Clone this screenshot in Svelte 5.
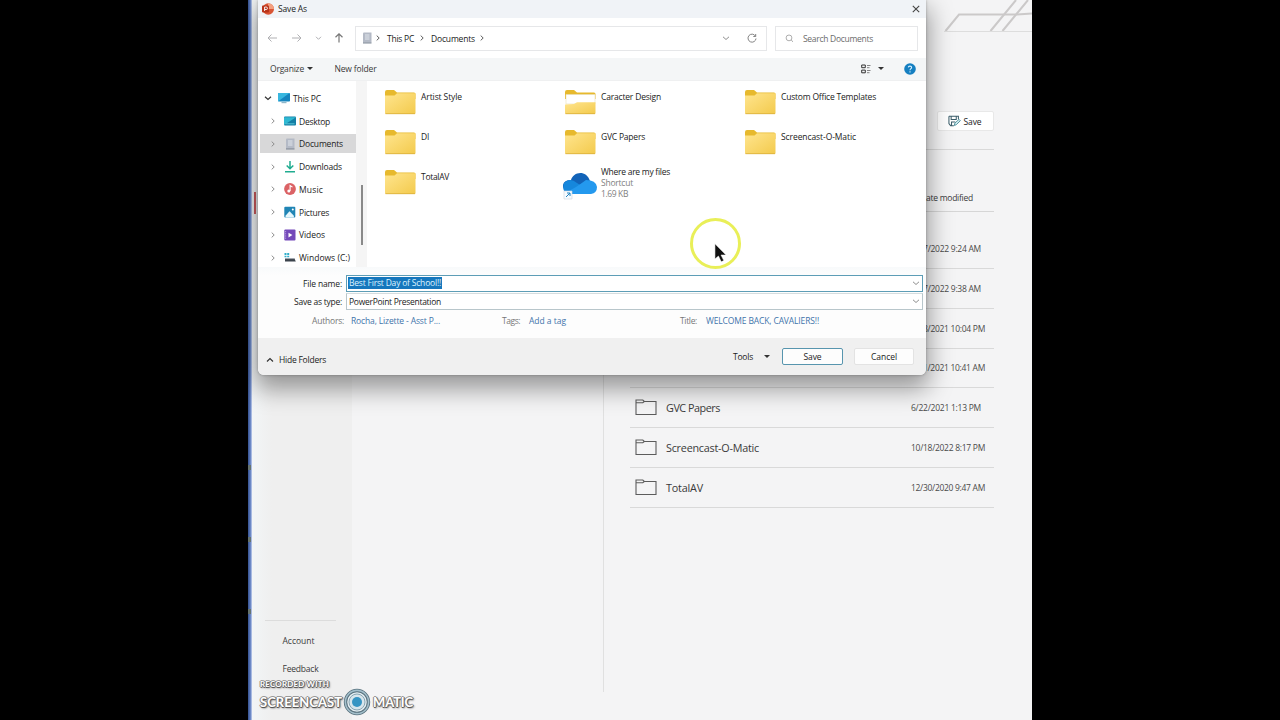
<script>
  // Tightens or loosens the tracking so that a label takes the given width.
  function fit(node, width) {
    const natural = node.getBoundingClientRect().width;
    node.style.letterSpacing = `${(width - natural) / node.textContent.length}px`;
  }
  const tree = [
    ['desktop', 'Desktop', 31], ['doc', 'Documents', 44], ['down', 'Downloads', 43],
    ['music', 'Music', 24], ['pic', 'Pictures', 30], ['video', 'Videos', 26], ['drive', 'Windows (C:)', 51]
  ];
  const files = [
    ['folder', 'Artist Style', 41], ['open', 'Caracter Design', 60], ['folder', 'Custom Office Templates', 95],
    ['folder', 'DI', 8], ['folder', 'GVC Papers', 44], ['folder', 'Screencast-O-Matic', 75],
    ['folder', 'TotalAV', 28], ['cloud', 'Where are my files', 69]
  ];
  const rows = [
    ['Caracter Design', 86, '8/17/2022 9:24 AM', 70], ['Custom Office Templates', 125, '8/17/2022 9:38 AM', 70],
    ['DI', 10, '8/18/2021 10:04 PM', 74], ['Artist Style', 56, '8/21/2021 10:41 AM', 74],
    ['GVC Papers', 54, '6/22/2021 1:13 PM', 70], ['Screencast-O-Matic', 93, '10/18/2022 8:17 PM', 74],
    ['TotalAV', 37, '12/30/2020 9:47 AM', 74]
  ];
</script>

{#snippet chev(dir, cls)}
  <svg class="chev {cls}" viewBox="0 0 8 8"><path d={dir === 'r' ? 'M2.7 1.6 5.2 4 2.7 6.4' : dir === 'd' ? 'M1 2.8 4 5.5 7 2.8' : 'M1 5.5 4 2.6 7 5.5'} /></svg>
{/snippet}

{#snippet icon(kind)}
  <svg class="ic" viewBox="0 0 12 12">
    {#if kind === 'pc'}
      <rect x="0" y="1" width="12" height="8.6" rx=".8" fill="#1685be" /><path d="M0 9.4 11.5 1H1Q0 1 0 2z" fill="#38b7df" /><path d="M3.5 10.6h5" stroke="#91b7c9" stroke-width="1.2" />
    {:else if kind === 'desktop'}
      <rect x="0" y="1.6" width="12" height="9" rx="1" fill="#147fa5" /><path d="M0 10 12 2.2H1Q0 2 0 3z" fill="#2fb8d2" /><path d="M1.5 8.8h9" stroke="#67d5e2" stroke-width=".8" />
    {:else if kind === 'doc'}
      <path d="M2 1.5Q2 .5 3 .5h7.5v9.8H2z" fill="#b4bac6" /><path d="M2 10.3h8.5v1.2H2z" fill="#7f8997" /><path d="M4 3h4.5M4 5h4.5M4 7h4.5" stroke="#e6ebf1" stroke-width=".9" />
    {:else if kind === 'down'}
      <path d="M6 0v7.4M2.7 4.5 6 7.8l3.3-3.3M1 10.7h10" fill="none" stroke="#20ac90" stroke-width="1.5" />
    {:else if kind === 'music'}
      <circle cx="6" cy="6" r="5.9" fill="#db6265" /><circle cx="4.8" cy="8" r="1.5" fill="#fff" /><path d="M6.1 8V2.6l2.4 1.5" fill="none" stroke="#fff" stroke-width="1.1" />
    {:else if kind === 'pic'}
      <rect x=".3" y=".8" width="11" height="10.8" rx="1" fill="#2085b5" /><path d="M1.5 11.4V9.8L5.5 5.2l4.4 4.6v1.6z" fill="#e6f7fc" /><circle cx="8.8" cy="3.4" r="1" fill="#fff" />
    {:else if kind === 'video'}
      <rect x=".3" y=".6" width="11.2" height="11" rx="1" fill="#7449b9" /><path d="M4.5 3.8v4.6L8.4 6z" fill="#fff" /><path d="M1.6 2v8.5" stroke="#b99ae1" stroke-width="1" stroke-dasharray="1.2 1" />
    {:else}
      <path d="M.5 1h2v2h-2zM3.2 1h2v2h-2zM.5 3.7h2v1.6h-2zM3.2 3.7h2v1.6h-2z" fill="#31aeca" /><path d="M1 6.6h9.5l1.3 3H1z" fill="#3b434c" /><path d="M1 6.6h9.5" stroke="#a4abb2" />
    {/if}
  </svg>
{/snippet}

<div class="screen">
  <div class="edge"><i></i><i></i><i></i></div>
  <div class="app">
    <nav class="side">
      <div class="links">
        <div><span use:fit={32}>Account</span></div>
        <div><span use:fit={36}>Feedback</span></div>
      </div>
    </nav>
    <section class="places"></section>
    <section class="list">
      <svg class="deco" viewBox="0 0 88 34"><g fill="none" stroke="#cbc9c9" stroke-width="2"><path d="M1.5 31 15 14.500H73L88 13.500" /><path d="M46.500 31 72 0M58.500 31 84 0" /></g><path d="M0 31.500H88" stroke="#ddd" /></svg>
      <div class="savebar">
        <div class="savebtn">
          <svg viewBox="0 0 14 12"><path d="M1 1h10.200v3M1 1v7.800L2.800 11h3.500M3.400 1v3.500h5.500V1M3.800 11V7h4" fill="none" stroke="#3d5f6b" stroke-width="1.100" /><path d="m6.800 10.800.6-2.500 4.500-4.100 1.400 1.500-4.400 4.300z" fill="#d8eff2" stroke="#398490" stroke-width=".9" /></svg>
          <span use:fit={18}>Save</span>
        </div>
      </div>
      <div class="head"><span use:fit={53}>Date modified</span></div>
      {#each rows as [name, w, date, dw]}
        <div class="row">
          <svg viewBox="0 0 22 17"><path d="M1 15.500V1h6.800l1.500 1.500H21v13z M1 3.700h6.800L9.300 2.500" fill="none" stroke="#5c5c5c" stroke-width="1.100" /></svg>
          <span class="name"><span use:fit={w}>{name}</span></span>
          <span class="date"><span use:fit={dw}>{date}</span></span>
        </div>
      {/each}
    </section>
  </div>

  <div class="dialog">
    <header class="title">
      <svg class="ppt" viewBox="0 0 12 12"><circle cx="6.200" cy="6" r="5.800" fill="#d95434" /><path d="M6 .2A5.800 5.800 0 0 1 12 6H6z" fill="#f4a080" /><rect x="0" y="2.600" width="7" height="6.800" rx=".8" fill="#b83219" /><path d="M2.600 8V4h1.600a1.200 1.200 0 0 1 0 2.500H2.600" fill="none" stroke="#fff" stroke-width=".9" /></svg>
      <span use:fit={29}>Save As</span>
      <svg class="close" viewBox="0 0 8 8"><path d="m.8.800 6.400 6.400M7.200.8.800 7.200" stroke="#444" stroke-width="1.100" /></svg>
    </header>
    <div class="nav">
      <svg class="arrows" viewBox="0 0 84 12"><g fill="none" stroke-width="1"><path d="M14 6H5M8.500 2.500 5 6l3.500 3.500M29 6h9M34.500 2.500 38 6l-3.500 3.500M53 4.800l2.500 2.500L58 4.800" stroke="#b0b0b3" /><path d="M76 10.500V2M72.500 5.300 76 1.900l3.500 3.400" stroke="#777" stroke-width="1.200" /></g></svg>
      <div class="addr">
        {@render icon('doc')}
        {@render chev('r', 'c1')}
        <span use:fit={27}>This PC</span>
        {@render chev('r', 'c2')}
        <span use:fit={44}>Documents</span>
        {@render chev('r', 'c3')}
        {@render chev('d', 'c4')}
        <svg class="refresh" viewBox="0 0 10 10"><path d="M8.500 3.200A4 4 0 1 0 9 5.500M8.700 1v2.500H6.300" fill="none" stroke="#777" stroke-width=".9" /></svg>
      </div>
      <div class="search">
        <svg viewBox="0 0 9 9"><circle cx="4" cy="3.900" r="2.900" fill="none" stroke="#999" stroke-width=".8" /><path d="M6.200 6 8 7.800" stroke="#999" stroke-width=".9" /></svg>
        <span use:fit={70}>Search Documents</span>
      </div>
    </div>
    <div class="tools">
      <span use:fit={34}>Organize</span><b class="tri"></b>
      <span class="newf"><span use:fit={42}>New folder</span></span>
      <svg class="views" viewBox="0 0 10 10"><path d="M.7 1h3.600v2.700H.7zM.7 6.100h3.600v2.700H.7z" fill="none" stroke="#333" /><path d="M6 1.500h3.500M6 3.700h2.500M6 6.500h3.500M6 8.700h2.500" stroke="#666" stroke-width=".8" /></svg>
      <b class="tri"></b>
      <svg class="help" viewBox="0 0 12 12"><circle cx="6" cy="6" r="5.800" fill="#157fc1" /><path d="M4.300 4.400C4.400 2.600 7.700 2.700 7.600 4.600 7.500 5.700 6 5.600 6 7.200M6 8.300v1.200" fill="none" stroke="#d5f0ff" stroke-width="1.100" /></svg>
    </div>
    <div class="body">
      <div class="tree">
        <div class="node root">{@render chev('d', 'dark')}{@render icon('pc')}<span use:fit={28}>This PC</span></div>
        {#each tree as [kind, label, w]}
          <div class="node" class:sel={kind === 'doc'}>{@render chev('r', '')}{@render icon(kind)}<span use:fit={w}>{label}</span></div>
        {/each}
      </div>
      <div class="scroll"><div class="thumb"></div></div>
      <div class="files">
        {#each files as [kind, label, w]}
          <div class="file">
            {#if kind === 'cloud'}
              <svg class="cloud" viewBox="0 0 36 30"><path d="M9 10C11 2 24-1 28 11Q32 14 29 20L7 22Q0 20 1 15 2 10 9 10" fill="#1263b8" /><path d="M2 13Q8 7 15 13L28 21Q26 24 23 24H8Q-1 23 2 13" fill="#1687dc" /><path d="M14 17Q20 13 24 10 34 10 35 17 35 23 29 24H7Q5 23 5 22z" fill="#2499ee" /><path d="M2 21h8v8H2z" fill="#f6fbff" stroke="#ccd5dd" stroke-width=".6" /><path d="m4 27 4-4M5 23h3v3" fill="none" stroke="#2382be" /></svg>
            {:else}
              <svg class="folder" viewBox="0 0 31 25">
                <defs><linearGradient id="fg" x1="0" y1="0" x2="1" y2="1"><stop stop-color="#ffe58f" /><stop offset="1" stop-color="#f3ca4c" /></linearGradient></defs>
                <path d="M0 2Q0 0 2 0h7l3 2.500h17q1.500 0 1.500 1.500V9H0z" fill="#e7b92d" />
                {#if kind === 'open'}<path d="M1 4.500h29V14H1z" fill="#fff" stroke="#eadfb8" stroke-width=".6" /><path d="M0 14.500 9 14l3-1.800h18.500V23q0 1-1 1H1q-1 0-1-1z" fill="url(#fg)" />
                {:else}<path d="M0 5.500h9.500L12 3.200h18.500V23q0 1-1 1H1q-1 0-1-1z" fill="url(#fg)" />{/if}
                <path d="M.5 23.700h29.500" stroke="#d9ae38" stroke-width=".8" />
              </svg>
            {/if}
            <div class="meta" class:three={kind === 'cloud'}>
              <div><span use:fit={w}>{label}</span></div>
              {#if kind === 'cloud'}<div class="dim"><span use:fit={32}>Shortcut</span></div><div class="dim"><span use:fit={27}>1.69 KB</span></div>{/if}
            </div>
          </div>
        {/each}
      </div>
    </div>
    <div class="form">
      <div class="field"><label for="fname"><span use:fit={39}>File name:</span></label><div class="box on" id="fname"><mark><span use:fit={92}>Best First Day of School!!</span></mark>{@render chev('d', 'end')}</div></div>
      <div class="field"><label for="ftype"><span use:fit={48}>Save as type:</span></label><div class="box" id="ftype"><span use:fit={92}>PowerPoint Presentation</span>{@render chev('d', 'end')}</div></div>
      <div class="props">
        <em><span use:fit={32}>Authors:</span></em><span class="val"><span use:fit={89}>Rocha, Lizette - Asst P...</span></span>
        <em><span use:fit={18}>Tags:</span></em><span class="val"><span use:fit={37}>Add a tag</span></span>
        <em><span use:fit={17}>Title:</span></em><span class="val"><span use:fit={113}>WELCOME BACK, CAVALIERS!!</span></span>
      </div>
    </div>
    <footer>
      {@render chev('u', 'dark')}
      <span class="hide"><span use:fit={47}>Hide Folders</span></span>
      <span class="tl"><span use:fit={20}>Tools</span></span><b class="tri"></b>
      <div class="btn primary"><span use:fit={18}>Save</span></div>
      <div class="btn"><span use:fit={26}>Cancel</span></div>
    </footer>
  </div>

  <div class="ring"></div>
  <svg class="cursor" viewBox="0 0 14 22"><path d="M1 1v16.500l3.800-3.200 3 6.200 2.800-1.300-3-6H13z" fill="#111" stroke="#fff" stroke-width=".6" /></svg>

  <div class="mark">
    <div class="rec"><span use:fit={69}>RECORDED WITH</span></div>
    <div class="brand">
      <span class="sc"><span use:fit={82}>SCREENCAST</span></span>
      <svg viewBox="0 0 28 28"><circle cx="14" cy="14" r="11.500" fill="#e4eef2" stroke="#57707c" stroke-width="3.400" /><circle cx="14" cy="14" r="11.600" fill="none" stroke="#a3bfcb" stroke-width="1.600" /><circle cx="14" cy="14" r="8" fill="#d8e6ec" stroke="#88a5b2" stroke-width="1" /><circle cx="14" cy="14" r="5" fill="#3695c3" /></svg>
      <span class="ma"><span use:fit={40}>MATIC</span></span>
    </div>
  </div>
</div>

<style>
  :global(body) { background: #000; overflow: hidden; }
  .screen { position: relative; width: 784px; height: 720px; margin-left: 248px; display: flex; overflow: hidden; background: #f4f4f5; font: 8.5px/11px "Open Sans", "Noto Sans", sans-serif; color: #222; white-space: nowrap; }
  .screen * { box-sizing: border-box; }
  svg { display: block; flex: none; overflow: visible; }
  span { display: inline-block; }
  .edge { width: 4px; flex: none; background: linear-gradient(90deg, #33508f, #6582c2 60%, #c5d2ef); padding-top: 465px; display: flex; flex-direction: column; gap: 67px; }
  .edge i { width: 3px; height: 5px; background: #66736d; }
  .app { flex: 1; display: flex; }
  .side { width: 100px; background: linear-gradient(90deg, #f2f5f6, #efefef 20%); display: flex; flex-direction: column; justify-content: flex-end; padding: 0 16px 8px 13px; }
  .links { border-top: 1px solid #dcdcdc; padding: 5px 0 0 17.500px; height: 92px; color: #3a3a3a; }
  .links div { height: 28px; display: flex; align-items: center; }
  .places { width: 252px; height: 692px; border-right: 1px solid #e0e0e0; }
  .list { flex: 1; padding-left: 26px; position: relative; }
  .deco { position: absolute; right: 0; top: 0; width: 88px; height: 34px; }
  .savebar { height: 150px; width: 364px; padding: 111px 0 0 307px; border-bottom: 1px solid #d9d9d9; }
  .savebtn { width: 57px; height: 20px; background: #fff; border: 1px solid #e8e8e8; border-radius: 2px; display: flex; align-items: center; padding-left: 10px; gap: 2.500px; }
  .savebtn svg { width: 13px; height: 12px; }
  .head { width: 364px; height: 62px; border-bottom: 1px solid #d6d6d6; padding: 42px 21px 0 0; text-align: right; color: #3a3a3a; }
  .row { width: 364px; height: 39.800px; border-bottom: 1px solid #d9d9d9; display: flex; align-items: center; padding-left: 5px; color: #3a3a3a; }
  .head + .row { height: 57px; padding-top: 17px; }
  .row svg { width: 22px; height: 17px; }
  .name { font-size: 10.800px; line-height: 15px; width: 254px; flex: none; padding-left: 9px; }
  .date { font-size: 8.500px; color: #4a4a4a; }

  .dialog { position: absolute; left: 10px; top: 0; width: 668px; height: 375px; background: #fff; border-radius: 0 0 6px 6px; box-shadow: 0 11px 24px 3px rgba(0,0,0,.38), 0 0 3px rgba(0,0,0,.3); display: flex; flex-direction: column; overflow: visible; }
  .dialog::before { content: ""; width: 2px; height: 22px; background: #a2484b; position: absolute; left: -4px; top: 192px; }
  .title { height: 18px; background: #f0f3f7; display: flex; align-items: center; padding: 0 6px 1px 4px; }
  .ppt { width: 12px; height: 12px; margin-right: 4px; }
  .close { width: 8px; height: 8px; margin-left: auto; }
  .nav { height: 40px; display: flex; align-items: center; padding-left: 5px; }
  .arrows { width: 84px; height: 12px; }
  .chev { width: 8px; height: 8px; fill: none; stroke: #888; stroke-width: .95; }
  .chev.dark { stroke: #333; stroke-width: 1.200; }
  .ic { width: 12px; height: 12px; }
  .addr { width: 412px; height: 25px; margin-left: 8px; border: 1px solid #e6e7e9; display: flex; align-items: center; padding-left: 5px; }
  .c1 { margin: 0 5px 0 1px; stroke: #555; } .c2 { margin: 0 5px 0 4px; stroke: #555; } .c3 { margin-left: 3px; stroke: #555; }
  .c4 { margin-left: auto; margin-right: 17px; }
  .refresh { width: 10px; height: 10px; margin-right: 9px; }
  .search { width: 143px; height: 25px; margin-left: 8px; border: 1px solid #e6e7e9; display: flex; align-items: center; padding-left: 9px; color: #6c6c6c; }
  .search svg { width: 9px; height: 9px; margin-right: 9px; }
  .tools { height: 23px; background: #f4f6f7; display: flex; align-items: center; padding: 0 0 1px 12px; color: #3a3a3a; border-bottom: 1px solid #eff0f1; }
  .tri { border: 3px solid transparent; border-top: 3.500px solid #333; border-bottom: 0; margin-left: 3px; }
  .newf { margin-left: 21.500px; }
  .views { width: 10px; height: 10px; margin-left: 484px; }
  .views + .tri { margin-left: 7px; }
  .help { width: 12px; height: 12px; margin-left: 20px; }
  .body { height: 186px; display: flex; }
  .tree { width: 98px; padding: 6px 0 0 2px; }
  .node { height: 22.750px; display: flex; align-items: center; padding-left: 9px; }
  .node .ic { margin: 0 3px 0 7px; }
  .node.root { padding-left: 4px; }
  .node.root .ic { margin: 0 3px 0 6px; }
  .node.sel { background: linear-gradient(#d8d8d9, #d8d8d9) center / 100% 19px no-repeat; }
  .scroll { width: 11px; background: #f5f5f5; padding: 104px 0 0 5px; }
  .thumb { width: 2px; height: 60px; background: #898989; }
  .files { flex: 1; padding: 0 0 0 18px; display: grid; grid-template-columns: repeat(3, 180px); grid-template-rows: repeat(3, 39.800px); overflow: hidden; }
  .file { display: flex; }
  .folder { width: 31px; height: 25px; margin-top: 9px; }
  .cloud { width: 36px; height: 30px; margin: 9px -2px 0 -3px; }
  .meta { padding: 10px 0 0 5px; }
  .meta.three { padding-top: 5px; line-height: 11.300px; }
  .meta div { height: 11.300px; }
  .dim { color: #808080; }
  .form { height: 71px; background: linear-gradient(#f8fafb, #fdfdfd 12%); padding: 7px 3px 0 0; }
  .field { height: 18px; display: flex; align-items: center; }
  .field label { width: 84px; text-align: right; margin-right: 4px; }
  .box { flex: 1; height: 17px; border: 1px solid #b8c6cb; border-top-color: #d5dddf; background: #fff; display: flex; align-items: center; padding: 0 2px; }
  .box.on { border-color: #5d9db6; }
  .end { margin-left: auto; }
  mark { background: #1677bd; color: #dcf3ff; height: 12px; line-height: 11px; padding: 0 1px; margin-left: -1px; }
  .props { display: flex; height: 21px; align-items: center; padding-left: 54px; }
  .props em { font-style: normal; color: #777; text-align: right; }
  .props .val { color: #3f74ab; margin-left: 7px; width: 151px; }
  .props .val ~ em ~ .val { width: 151px; margin-left: 9px; }
  footer { height: 37px; background: #f0f0f0; border-radius: 0 0 6px 6px; display: flex; align-items: center; padding-left: 8px; }
  footer > .chev { margin-top: 6px; }
  .hide { margin: 5px 0 0 5px; }
  .tl { margin-left: 407px; }
  footer .tri { margin-left: 11px; }
  .btn { width: 60px; height: 17px; background: #fdfdfd; border: 1px solid #e3e3e3; border-radius: 2px; display: flex; justify-content: center; align-items: center; margin-left: 11px; }
  .btn.primary { width: 61px; margin-left: 12px; border-color: #5795ae; }
  .ring { position: absolute; left: 442px; top: 218px; width: 51px; height: 51px; border: 3px solid #e9ef58; border-radius: 50%; }
  .cursor { position: absolute; left: 466px; top: 242px; width: 13px; height: 22px; }
  .mark { position: absolute; left: 12px; top: 679px; color: #fff; font-family: Lato, sans-serif; font-weight: 700; text-shadow: 1px 0 #666, -1px 0 #888, 0 1px #555, 0 -1px #999, 1px 1px 2px #333; }
  .rec { font-size: 8px; line-height: 10px; height: 9px; }
  .brand { display: flex; align-items: center; font-size: 13px; line-height: 16px; height: 27px; }
  .brand svg { width: 28px; height: 28px; margin: 0 2px 0 1px; }
</style>
